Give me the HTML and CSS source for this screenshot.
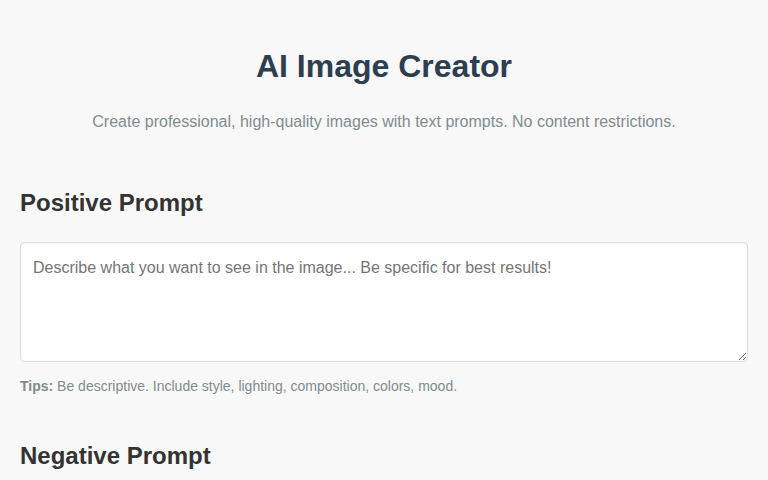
FILE: index.html
```html
<!DOCTYPE html>
<html lang="en">
<head>
<meta charset="utf-8">
<title>AI Image Creator</title>
<link rel="stylesheet" href="styles.css">
</head>
<body>
<div class="container">
  <header class="header">
    <h1 class="title">AI Image Creator</h1>
    <p class="subtitle">Create professional, high-quality images with text prompts. No content restrictions.</p>
  </header>
  <section class="section">
    <h2 class="section-title">Positive Prompt</h2>
    <textarea class="prompt" placeholder="Describe what you want to see in the image... Be specific for best results!"></textarea>
    <p class="tips"><strong>Tips:</strong> Be descriptive. Include style, lighting, composition, colors, mood.</p>
  </section>
  <section class="section">
    <h2 class="section-title">Negative Prompt</h2>
    <textarea class="prompt" placeholder="Describe what you don't want in the image..."></textarea>
  </section>
</div>
</body>
</html>
```
FILE: styles.css
```css
html, body {
  margin: 0;
  padding: 0;
  background: #f8f8f8;
  font-family: "Liberation Sans", Arial, sans-serif;
}
.container {
  padding: 20px;
}
.header {
  text-align: center;
  padding-top: 26px;
}
.title {
  margin: 0;
  font-size: 32px;
  line-height: 40px;
  font-weight: bold;
  color: #2c3e50;
}
.subtitle {
  margin: 24px 0 0;
  font-size: 16px;
  line-height: 24px;
  color: #7f8c8d;
}
.section {
  margin-top: 54px;
}
.section + .section {
  margin-top: 45px;
}
.section-title {
  margin: 0 0 24px;
  font-size: 24px;
  line-height: 30px;
  font-weight: bold;
  color: #333;
}
.prompt {
  display: block;
  box-sizing: border-box;
  width: 100%;
  height: 120px;
  padding: 12px;
  border: 1px solid #ddd;
  border-radius: 4px;
  background: #fff;
  font-family: "Liberation Sans", Arial, sans-serif;
  font-size: 16px;
  line-height: 1.6;
  color: #333;
  box-shadow: inset 0 1px 3px rgba(0,0,0,0.06);
}
.prompt::placeholder {
  color: #757575;
}
.tips {
  margin: 14px 0 0;
  font-size: 14px;
  line-height: 20px;
  color: #7f8c8d;
}
.tips strong {
  color: #7f8c8d;
}
```
